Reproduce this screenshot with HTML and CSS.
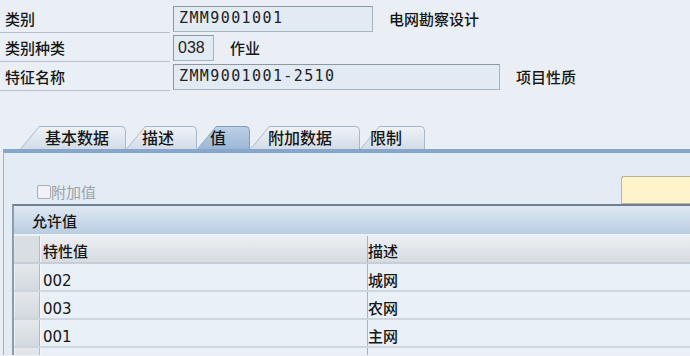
FILE: index.html
```html
<!DOCTYPE html>
<html lang="zh-CN">
<head>
  <meta charset="UTF-8" />
  <title>特征值</title>
  <link rel="stylesheet" href="styles.css">
</head>
<body>
  <div class="head">
    <div class="row">
      <div class="label">类别</div>
      <div class="field w-200 mono">ZMM9001001</div>
      <div class="desc">电网勘察设计</div>
    </div>
    <div class="row">
      <div class="label">类别种类</div>
      <div class="field w-41">038</div>
      <div class="desc short">作业</div>
    </div>
    <div class="row">
      <div class="label">特征名称</div>
      <div class="field w-327 mono">ZMM9001001-2510</div>
      <div class="desc">项目性质</div>
    </div>
  </div>

  <div class="tabs">
    <div class="tab tab-basic">基本数据</div>
    <div class="tab tab-desc">描述</div>
    <div class="tab tab-values active">值</div>
    <div class="tab tab-extra">附加数据</div>
    <div class="tab tab-limit">限制</div>
  </div>

  <div class="panel">
    <div class="toolbar">
      <label class="check"><span class="box"></span>附加值</label>
      <div class="yellow"></div>
    </div>

    <div class="table">
      <div class="title">允许值</div>
      <div class="trow thead">
        <div class="sel"></div>
        <div class="c1">特性值</div>
        <div class="c2">描述</div>
      </div>
      <div class="trow">
        <div class="sel"></div>
        <div class="c1">002</div>
        <div class="c2">城网</div>
      </div>
      <div class="trow">
        <div class="sel"></div>
        <div class="c1">003</div>
        <div class="c2">农网</div>
      </div>
      <div class="trow">
        <div class="sel"></div>
        <div class="c1">001</div>
        <div class="c2">主网</div>
      </div>
      <div class="trow">
        <div class="sel"></div>
        <div class="c1"></div>
        <div class="c2"></div>
      </div>
    </div>
  </div>
</body>
</html>
```

FILE: styles.css
```css
* {
  box-sizing: border-box;
}

body {
  margin: 0;
  width: 690px;
  height: 356px;
  overflow: hidden;
  background: #e9eff5;
  font-family: "Noto Sans CJK SC", "Liberation Sans", sans-serif;
  font-size: 15px;
  font-weight: 500;
  color: #161616;
}

.head {
  padding-top: 4px;
}

.row {
  display: flex;
  align-items: center;
  height: 29px;
}

.label {
  width: 170px;
  height: 28px;
  line-height: 27px;
  padding-left: 5px;
  border-bottom: 1px solid #b9c1c9;
  flex-shrink: 0;
}

.field {
  margin-left: 3px;
  height: 26px;
  line-height: 23px;
  padding-left: 5px;
  background: #e2ebf4;
  border: 1px solid #a9b3bd;
  border-top-color: #8e989f;
  border-left-color: #8e989f;
  font-family: "Liberation Sans", sans-serif;
  font-weight: 400;
  font-size: 16px;
  color: #222;
}

.field.mono {
  font-family: "DejaVu Sans Mono", "Liberation Mono", monospace;
  font-size: 15px;
  letter-spacing: 1.4px;
}

.w-200 { width: 200px; }
.w-41 { width: 41px; padding-left: 4px; }
.w-327 { width: 327px; }

.desc {
  margin-left: 16px;
}

/* tab strip */
.tabs {
  display: flex;
  margin-top: 35px;
  padding-left: 20px;
  height: 23px;
  align-items: flex-end;
}

.tab {
  position: relative;
  z-index: 0;
  height: 23px;
  line-height: 22px;
  font-size: 16px;
  white-space: nowrap;
}

.tab-basic { width: 106px; padding-left: 25px; }
.tab-desc { width: 71px; padding-left: 16px; }
.tab-values { width: 53px; padding-left: 13px; }
.tab-extra { width: 110px; padding-left: 18px; }
.tab-limit { width: 65px; padding-left: 10px; }

.tab::before,
.tab::after {
  content: "";
  position: absolute;
  top: 0;
  bottom: 0;
  z-index: -1;
  background: linear-gradient(#eef2f7, #d3dce7);
  border-top: 1px solid #a9b8c8;
}

.tab::before {
  left: 0;
  width: 30px;
  border-left: 1px solid #a9b8c8;
  transform: skewX(-40deg);
  transform-origin: bottom left;
}

.tab::after {
  left: 20px;
  right: 0;
  border-right: 1px solid #a9b8c8;
  border-radius: 0 5px 0 0;
}

.tab.active::before,
.tab.active::after {
  background: linear-gradient(#bcd0e5, #9cb7d6);
  border-color: #7f9cbf;
}

.panel {
  margin-left: 3px;
  height: 206px;
  overflow: hidden;
  border-top: 4px solid #86a6cc;
  border-left: 1px solid #9fb2c6;
  background: #e3ebf4;
}

.toolbar {
  display: flex;
  align-items: flex-end;
  justify-content: space-between;
  height: 51px;
}

.check {
  display: flex;
  align-items: center;
  margin-left: 33px;
  margin-bottom: 2px;
  color: #9aa3ac;
  font-weight: 400;
  font-size: 15px;
}

.box {
  width: 14px;
  height: 14px;
  border: 1px solid #a6aeb6;
  border-radius: 2px;
  background: #eef2f6;
}

.yellow {
  width: 69px;
  height: 28px;
  background: #fff3cc;
  border: 1px solid #b9b49c;
  border-right: none;
  border-radius: 3px 0 0 0;
}

/* value table */
.table {
  margin-left: 8px;
  border-top: 2px solid #6f8094;
  border-left: 2px solid #8c9cae;
  background: #e9f0f7;
}

.title {
  height: 30px;
  line-height: 30px;
  padding-left: 18px;
  background: linear-gradient(#dfe8f2, #b9cde2);
  border-bottom: 2px solid #edf1f5;
}

.trow {
  display: flex;
  height: 28px;
  border-bottom: 2px solid #cfd6dd;
}

.thead {
  background: linear-gradient(#eceff2, #d7dce1);
  border-bottom: 2px solid #c7ced6;
}

.sel {
  width: 25px;
  margin-left: 1px;
  background: linear-gradient(#e4e8ec, #d3d9df);
  border-right: 1px solid #b2bac2;
  flex-shrink: 0;
}

.thead .sel {
  background: #d9dee3;
}

.c1 {
  width: 327px;
  padding-left: 2px;
  padding-top: 2px;
  line-height: 30px;
  border-left: 1px solid #f4f6f8;
  font-family: "DejaVu Sans", "Noto Sans CJK SC", sans-serif;
  font-weight: 400;
}

.thead .c1 {
  font-family: "Noto Sans CJK SC", sans-serif;
  font-weight: 500;
  padding-top: 0;
  line-height: 30px;
}

.c2 {
  flex: 1;
  line-height: 31px;
  border-left: 1px solid #aab3bc;
}

.thead .c2 {
  line-height: 30px;
}
```
